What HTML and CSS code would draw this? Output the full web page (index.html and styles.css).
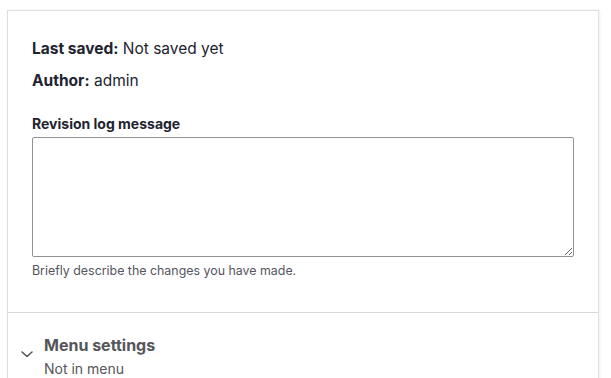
FILE: index.html
```html
<!DOCTYPE html>
<html>
<head>
<meta charset="utf-8">
<link rel="stylesheet" href="styles.css">
</head>
<body>
<div class="panel">
  <div class="meta">
    <p class="meta-item"><span class="meta-label">Last saved:</span> Not saved yet</p>
    <p class="meta-item author"><span class="meta-label">Author:</span> admin</p>
    <div class="field">
      <label class="field-label" for="log">Revision log message</label>
      <textarea id="log" class="field-input"></textarea>
      <div class="field-desc">Briefly describe the changes you have made.</div>
    </div>
  </div>
  <div class="details">
    <div class="summary">
      <svg class="chevron" width="14" height="10" viewBox="0 0 14 10"><path d="M2 3 L7 7.5 L12 3" fill="none" stroke="#55565b" stroke-width="1.6" stroke-linecap="round" stroke-linejoin="round"/></svg>
      <div class="summary-text">
        <div class="summary-title">Menu settings</div>
        <div class="summary-sub">Not in menu</div>
      </div>
    </div>
  </div>
</div>
</body>
</html>
```
FILE: styles.css
```css
html, body {
  margin: 0;
  padding: 0;
  background: #fff;
}
body {
  font-family: Inter, "Liberation Sans", sans-serif;
  color: #222330;
  padding: 10px 0 0 7px;
}
.panel {
  width: 590px;
  border: 1px solid #dedfe2;
  border-bottom: none;
  box-shadow: 1px 0 3px rgba(0,0,0,0.06);
  height: 400px;
}
.meta {
  padding: 28px 24px 33px 24px;
}
.meta-item {
  margin: 0;
  font-size: 15.5px;
  line-height: 20px;
}
.meta-item.author {
  margin-top: 12px;
}
.meta-label {
  font-weight: 700;
}
.field {
  margin-top: 24px;
  display: flex;
  flex-direction: column;
}
.field-label {
  font-size: 14px;
  line-height: 18px;
  font-weight: 700;
}
.field-input {
  margin-top: 4px;
  width: 542px;
  height: 120px;
  box-sizing: border-box;
  border: 1px solid #919297;
  border-radius: 2px;
  padding: 0;
  resize: vertical;
}
.field-desc {
  margin-top: 6px;
  font-size: 12.4px;
  line-height: 16px;
  color: #545560;
}
.details {
  border-top: 1px solid #d8d9de;
}
.summary {
  display: flex;
  align-items: center;
  padding: 22px 0 0 12px;
  gap: 10px;
  color: #55565b;
}
.chevron {
  margin-bottom: 6px;
}
.summary-title {
  font-size: 16px;
  line-height: 20px;
  font-weight: 700;
}
.summary-sub {
  margin-top: 4px;
  font-size: 14px;
  line-height: 20px;
}
```
